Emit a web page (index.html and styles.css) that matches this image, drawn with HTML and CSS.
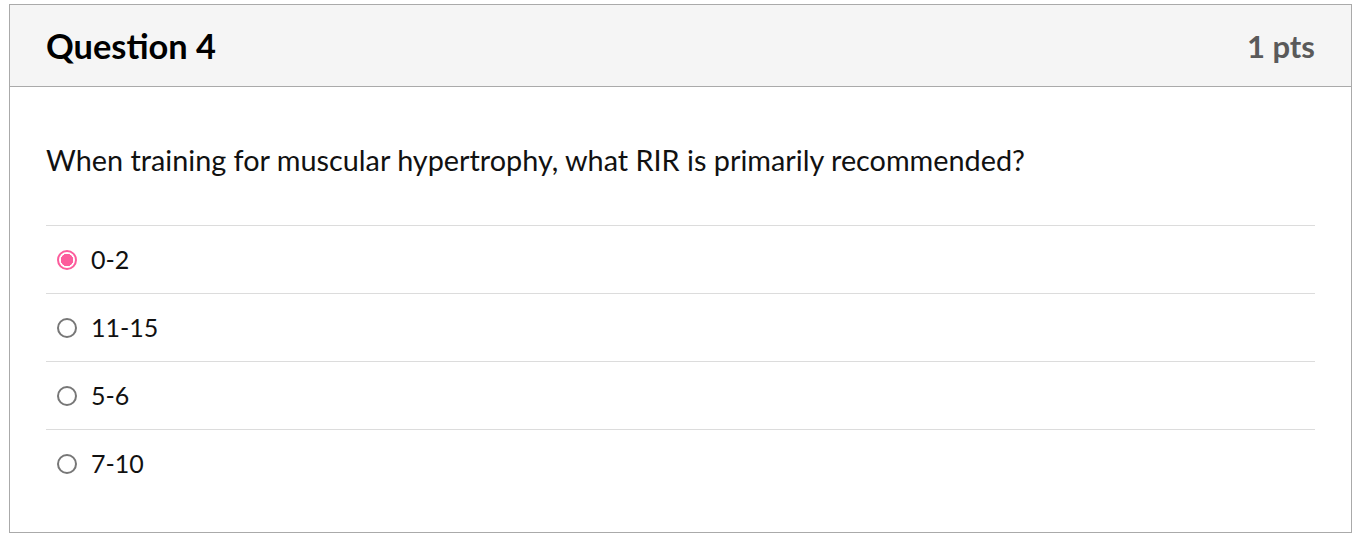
FILE: index.html
```html
<!DOCTYPE html>
<html>
<head>
<meta charset="utf-8">
<link rel="stylesheet" href="styles.css">
</head>
<body>
<div class="question">
  <div class="header">
    <h2 class="title">Question 4</h2>
    <div class="pts">1 pts</div>
  </div>
  <div class="content">
    <p class="text">When training for muscular hypertrophy, what RIR is primarily recommended?</p>
    <div class="answers">
      <label class="answer"><span class="radio checked"></span><span class="label">0-2</span></label>
      <label class="answer"><span class="radio"></span><span class="label">11-15</span></label>
      <label class="answer"><span class="radio"></span><span class="label">5-6</span></label>
      <label class="answer"><span class="radio"></span><span class="label">7-10</span></label>
    </div>
  </div>
</div>
</body>
</html>
```
FILE: styles.css
```css
html, body { margin: 0; padding: 0; background: #fff; }
body {
  padding: 4px 4px 0 9px;
  font-family: Lato, "Open Sans", sans-serif;
  color: #111;
}
.question {
  border: 1px solid #aaaaaa;
  height: 529px;
  box-sizing: border-box;
}
.header {
  height: 82px;
  box-sizing: border-box;
  background: #f5f5f5;
  border-bottom: 1px solid #aaaaaa;
  display: flex;
  align-items: center;
  justify-content: space-between;
  padding: 0 36px;
}
.title {
  margin: 0;
  font-size: 34.4px;
  font-weight: 700;
  color: #000;
}
.pts {
  font-size: 31px;
  font-weight: 700;
  color: #5a5a5a;
}
.content {
  padding: 0 36px;
}
.text {
  margin: 0;
  height: 138px;
  box-sizing: border-box;
  padding-top: 8px;
  display: flex;
  align-items: center;
  font-size: 28.8px;
  color: #111;
}
.answer {
  display: flex;
  align-items: center;
  height: 68px;
  border-top: 1px solid #dcdcdc;
  box-sizing: border-box;
}
.radio {
  width: 20px;
  height: 20px;
  box-sizing: border-box;
  border: 2px solid #777;
  border-radius: 50%;
  margin-left: 11px;
  margin-right: 14px;
  display: inline-block;
}
.radio.checked {
  border-color: #fc5c9c;
  background: radial-gradient(circle, #fc5c9c 0 6px, #fff 6.5px);
}
.label {
  font-size: 25px;
  padding-bottom: 2px;
  color: #111;
}
```
